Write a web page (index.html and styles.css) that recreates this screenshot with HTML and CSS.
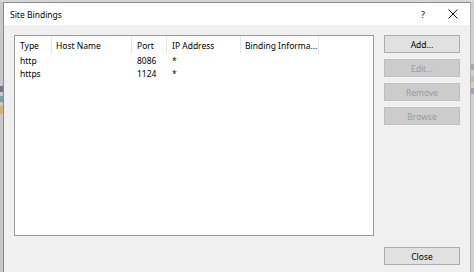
FILE: index.html
```html
<!DOCTYPE html>
<html>
<head>
<meta charset="utf-8">
<link rel="stylesheet" href="styles.css">
</head>
<body>
<div class="screen">
  <div class="strip-left">
    <span class="bit b1"></span><span class="bit b2"></span><span class="bit b3"></span>
  </div>
  <div class="dialog">
    <div class="titlebar">
      <span class="title">Site Bindings</span>
      <span class="help">?</span>
      <svg class="close-x" width="10" height="10" viewBox="0 0 10 10"><path d="M0.5 0.5 L9.5 9.5 M9.5 0.5 L0.5 9.5" stroke="#111" stroke-width="1" fill="none"/></svg>
    </div>
    <div class="body">
      <div class="main">
        <div class="listbox">
          <div class="row header">
            <div class="cell c1">Type</div>
            <div class="cell c2">Host Name</div>
            <div class="cell c3">Port</div>
            <div class="cell c4">IP Address</div>
            <div class="cell c5">Binding Informa...</div>
          </div>
          <div class="row">
            <div class="cell c1">http</div>
            <div class="cell c2"></div>
            <div class="cell c3">8086</div>
            <div class="cell c4">*</div>
            <div class="cell c5"></div>
          </div>
          <div class="row">
            <div class="cell c1">https</div>
            <div class="cell c2"></div>
            <div class="cell c3">1124</div>
            <div class="cell c4">*</div>
            <div class="cell c5"></div>
          </div>
        </div>
        <div class="buttons">
          <button class="btn">Add...</button>
          <button class="btn disabled">Edit...</button>
          <button class="btn disabled">Remove</button>
          <button class="btn disabled">Browse</button>
        </div>
      </div>
      <div class="footer">
        <button class="btn">Close</button>
      </div>
    </div>
  </div>
  <div class="strip-right">
    <span class="bit r1"></span><span class="bit r2"></span><span class="bit r3"></span>
  </div>
</div>
</body>
</html>
```

FILE: styles.css
```css
html, body {
  margin: 0;
  padding: 0;
  width: 474px;
  height: 272px;
  overflow: hidden;
  background: #d6d6d6;
  font-family: "Noto Sans", "Open Sans", sans-serif;
  font-size: 8.5px;
  color: #000;
}

.screen {
  display: flex;
  padding-top: 2px;
  height: 270px;
}

.strip-left {
  width: 3px;
  background: #c8c8c8;
  display: flex;
  flex-direction: column;
  padding-top: 84px;
  gap: 4px;
}

.strip-right {
  width: 3px;
  background: #cfcfcf;
  display: flex;
  flex-direction: column;
  padding-top: 62px;
  gap: 6px;
}

.bit { display: block; width: 3px; height: 6px; }
.b1 { background: #6a7a8a; }
.b2 { background: #7aa0b0; }
.b3 { background: #d8b070; height: 8px; }
.r1 { background: #a8b098; }
.r2 { background: #b0c898; }
.r3 { background: #a0a8b8; }

.dialog {
  width: 466px;
  border-left: 1px solid #8a8a8a;
  border-top: 1px solid #8a8a8a;
  border-right: 1px solid #b0b0b0;
  display: flex;
  flex-direction: column;
  background: #f0f0f0;
}

.titlebar {
  height: 22px;
  background: #ffffff;
  display: flex;
  align-items: center;
  padding-left: 6px;
}

.title {
  flex: 1;
  font-size: 8.5px;
}

.help {
  font-size: 9px;
  width: 10px;
  margin-right: 17px;
}

.close-x {
  margin-right: 12px;
}

.body {
  flex: 1;
  display: flex;
  flex-direction: column;
  padding: 10px 10px 7px 10px;
}

.main {
  display: flex;
  gap: 10px;
}

.listbox {
  width: 358px;
  height: 199px;
  background: #fff;
  border: 1px solid #9a9a9a;
}

.row {
  display: flex;
  height: 13px;
  align-items: center;
}

.row.header {
  height: 18px;
}

.cell {
  box-sizing: border-box;
  padding-left: 5px;
  white-space: nowrap;
  overflow: hidden;
  height: 100%;
  display: flex;
  align-items: center;
}

.header .cell {
  border-right: 1px solid #e5e5e5;
}

.c1 { width: 37px; }
.c2 { width: 80px; padding-left: 4px; }
.c3 { width: 35px; }
.c4 { width: 74px; }
.c5 { width: 78px; padding-left: 4px; }

.buttons {
  display: flex;
  flex-direction: column;
  gap: 6px;
}

.btn {
  width: 76px;
  height: 18px;
  box-sizing: border-box;
  background: #e1e1e1;
  border: 1px solid #adadad;
  font-family: "Noto Sans", "Open Sans", sans-serif;
  font-size: 8.5px;
  color: #000;
  padding: 0;
  margin: 0;
}

.btn.disabled {
  background: #cccccc;
  border-color: #bfbfbf;
  color: #9a9a9a;
}

.footer {
  margin-top: auto;
  display: flex;
  justify-content: flex-end;
}
```
